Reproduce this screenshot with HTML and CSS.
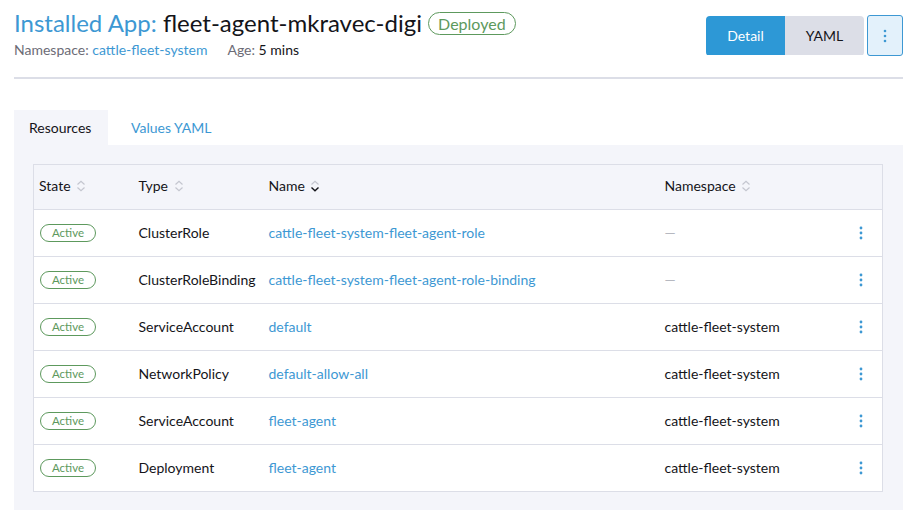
FILE: index.html
```html
<!DOCTYPE html>
<html>
<head>
<meta charset="utf-8">
<link rel="stylesheet" href="styles.css">
</head>
<body>
<div class="page">
  <header class="masthead">
    <div class="title-block">
      <h1 class="title"><span class="title-prefix">Installed App:</span> fleet-agent-mkravec-digi <span class="badge-deployed">Deployed</span></h1>
      <div class="meta">
        <span class="meta-item"><span class="meta-label">Namespace:</span> <a class="link">cattle-fleet-system</a></span>
        <span class="meta-item"><span class="meta-label">Age:</span> 5 mins</span>
      </div>
    </div>
    <div class="actions">
      <div class="toggle">
        <button class="toggle-btn active">Detail</button>
        <button class="toggle-btn">YAML</button>
      </div>
      <button class="menu-btn">
        <svg width="4" height="14" viewBox="0 0 4 14"><circle cx="2" cy="2" r="1.3" fill="#3d98d3"/><circle cx="2" cy="7" r="1.3" fill="#3d98d3"/><circle cx="2" cy="12" r="1.3" fill="#3d98d3"/></svg>
      </button>
    </div>
  </header>
  <hr class="divider">
  <div class="tabs">
    <div class="tab active">Resources</div>
    <div class="tab">Values YAML</div>
  </div>
  <div class="panel">
    <table class="table">
      <thead>
        <tr>
          <th class="c-state">State <svg class="sort" width="10" height="12" viewBox="0 0 10 12"><path d="M1.5 4.5 L5 1.2 L8.5 4.5" fill="none" stroke="#c4c6cf" stroke-width="1.2"/><path d="M1.5 7.5 L5 10.8 L8.5 7.5" fill="none" stroke="#c4c6cf" stroke-width="1.2"/></svg></th>
          <th class="c-type">Type <svg class="sort" width="10" height="12" viewBox="0 0 10 12"><path d="M1.5 4.5 L5 1.2 L8.5 4.5" fill="none" stroke="#c4c6cf" stroke-width="1.2"/><path d="M1.5 7.5 L5 10.8 L8.5 7.5" fill="none" stroke="#c4c6cf" stroke-width="1.2"/></svg></th>
          <th class="c-name">Name <svg class="sort" width="10" height="12" viewBox="0 0 10 12"><path d="M1.5 4.5 L5 1.2 L8.5 4.5" fill="none" stroke="#c4c6cf" stroke-width="1.2"/><path d="M1.5 7.5 L5 10.8 L8.5 7.5" fill="none" stroke="#141419" stroke-width="1.4"/></svg></th>
          <th class="c-ns">Namespace <svg class="sort" width="10" height="12" viewBox="0 0 10 12"><path d="M1.5 4.5 L5 1.2 L8.5 4.5" fill="none" stroke="#c4c6cf" stroke-width="1.2"/><path d="M1.5 7.5 L5 10.8 L8.5 7.5" fill="none" stroke="#c4c6cf" stroke-width="1.2"/></svg></th>
          <th class="c-act"></th>
        </tr>
      </thead>
      <tbody>
        <tr>
          <td class="c-state"><span class="badge-active">Active</span></td>
          <td class="c-type">ClusterRole</td>
          <td class="c-name"><a class="link">cattle-fleet-system-fleet-agent-role</a></td>
          <td class="c-ns"><span class="dash">—</span></td>
          <td class="c-act"><svg width="4" height="14" viewBox="0 0 4 14"><circle cx="2" cy="2" r="1.4" fill="#3d98d3"/><circle cx="2" cy="7" r="1.4" fill="#3d98d3"/><circle cx="2" cy="12" r="1.4" fill="#3d98d3"/></svg></td>
        </tr>
        <tr>
          <td class="c-state"><span class="badge-active">Active</span></td>
          <td class="c-type">ClusterRoleBinding</td>
          <td class="c-name"><a class="link">cattle-fleet-system-fleet-agent-role-binding</a></td>
          <td class="c-ns"><span class="dash">—</span></td>
          <td class="c-act"><svg width="4" height="14" viewBox="0 0 4 14"><circle cx="2" cy="2" r="1.4" fill="#3d98d3"/><circle cx="2" cy="7" r="1.4" fill="#3d98d3"/><circle cx="2" cy="12" r="1.4" fill="#3d98d3"/></svg></td>
        </tr>
        <tr>
          <td class="c-state"><span class="badge-active">Active</span></td>
          <td class="c-type">ServiceAccount</td>
          <td class="c-name"><a class="link">default</a></td>
          <td class="c-ns">cattle-fleet-system</td>
          <td class="c-act"><svg width="4" height="14" viewBox="0 0 4 14"><circle cx="2" cy="2" r="1.4" fill="#3d98d3"/><circle cx="2" cy="7" r="1.4" fill="#3d98d3"/><circle cx="2" cy="12" r="1.4" fill="#3d98d3"/></svg></td>
        </tr>
        <tr>
          <td class="c-state"><span class="badge-active">Active</span></td>
          <td class="c-type">NetworkPolicy</td>
          <td class="c-name"><a class="link">default-allow-all</a></td>
          <td class="c-ns">cattle-fleet-system</td>
          <td class="c-act"><svg width="4" height="14" viewBox="0 0 4 14"><circle cx="2" cy="2" r="1.4" fill="#3d98d3"/><circle cx="2" cy="7" r="1.4" fill="#3d98d3"/><circle cx="2" cy="12" r="1.4" fill="#3d98d3"/></svg></td>
        </tr>
        <tr>
          <td class="c-state"><span class="badge-active">Active</span></td>
          <td class="c-type">ServiceAccount</td>
          <td class="c-name"><a class="link">fleet-agent</a></td>
          <td class="c-ns">cattle-fleet-system</td>
          <td class="c-act"><svg width="4" height="14" viewBox="0 0 4 14"><circle cx="2" cy="2" r="1.4" fill="#3d98d3"/><circle cx="2" cy="7" r="1.4" fill="#3d98d3"/><circle cx="2" cy="12" r="1.4" fill="#3d98d3"/></svg></td>
        </tr>
        <tr>
          <td class="c-state"><span class="badge-active">Active</span></td>
          <td class="c-type">Deployment</td>
          <td class="c-name"><a class="link">fleet-agent</a></td>
          <td class="c-ns">cattle-fleet-system</td>
          <td class="c-act"><svg width="4" height="14" viewBox="0 0 4 14"><circle cx="2" cy="2" r="1.4" fill="#3d98d3"/><circle cx="2" cy="7" r="1.4" fill="#3d98d3"/><circle cx="2" cy="12" r="1.4" fill="#3d98d3"/></svg></td>
        </tr>
      </tbody>
    </table>
  </div>
</div>
</body>
</html>
```
FILE: styles.css
```css
* { box-sizing: border-box; }
html, body { margin: 0; padding: 0; background: #fff; }
body {
  font-family: Lato, "Noto Sans", sans-serif;
  color: #141419;
  font-size: 14px;
}
.page { padding: 0 5px 0 14px; width: 908px; }
.masthead {
  display: flex;
  justify-content: space-between;
  align-items: flex-start;
  padding-top: 9px;
  height: 77px;
}
.title {
  margin: 0;
  font-size: 24px;
  font-weight: 400;
  line-height: 28px;
  display: flex;
  align-items: center;
  white-space: pre;
}
.title-prefix { color: #3d98d3; }
.badge-deployed {
  margin-left: 0;
  font-size: 16px;
  color: #5d995d;
  border: 1px solid #5d995d;
  border-radius: 12px;
  padding: 0 9px;
  line-height: 21px;
  height: 23px;
}
.meta { margin-top: 4px; display: flex; gap: 20px; font-size: 14px; line-height: 18px; }
.meta-label { color: #6c6c76; }
.link { color: #3d98d3; text-decoration: none; }
.actions { display: flex; gap: 3px; padding-top: 6px; }
.toggle { display: flex; border-radius: 4px; overflow: hidden; margin-top: 1px; }
.toggle-btn {
  font-family: Lato, "Noto Sans", sans-serif;
  width: 79px;
  height: 39px;
  border: 0;
  font-size: 14px;
  background: #dcdee7;
  color: #141419;
  padding: 0;
}
.toggle-btn.active { background: #2d98d6; color: #fff; }
.menu-btn {
  width: 36px;
  height: 41px;
  border: 1px solid #3d98d3;
  background: #e3f1fb;
  border-radius: 3px;
  display: flex;
  align-items: center;
  justify-content: center;
  padding: 0;
}
.divider {
  margin: 0;
  border: 0;
  border-top: 2px solid #dcdee7;
  height: 0;
}
.tabs { display: flex; margin-top: 31px; height: 35px; }
.tab {
  padding: 0 16px 0 15px;
  line-height: 36px;
  font-size: 14px;
  color: #3d98d3;
  width: 94px;
}
.tab + .tab { padding-left: 23px; width: auto; }
.tab.active { background: #f4f5fa; color: #141419; }
.panel {
  background: #f4f5fa;
  padding: 19px 20px 19px 19px;
  height: 365px;
}
.table {
  width: 850px;
  border-collapse: collapse;
  border: 1px solid #dcdee7;
  background: #fff;
}
.table th {
  background: #f4f5fa;
  text-align: left;
  font-weight: 400;
  height: 45px;
  padding: 0 0 3px 5px;
  font-size: 14px;
  white-space: nowrap;
}
.table td {
  height: 47px;
  border-top: 1px solid #dcdee7;
  padding: 0 0 1px 5px;
  white-space: nowrap;
}
.sort { vertical-align: -1px; margin-left: 2px; }
.c-state { width: 100px; }
.c-type { width: 130px; }
.c-name { width: 396px; }
.c-ns { width: 198px; }
.c-act { text-align: left; padding-left: 0 !important; }
.c-act svg { display: block; margin-left: 1px; }
.badge-active {
  display: inline-block;
  font-size: 11.5px;
  color: #5d995d;
  border: 1px solid #5d995d;
  border-radius: 9px;
  width: 56px;
  text-align: center;
  line-height: 16px;
  margin-left: 1px;
}
.dash { color: #b6b8c0; }
```
